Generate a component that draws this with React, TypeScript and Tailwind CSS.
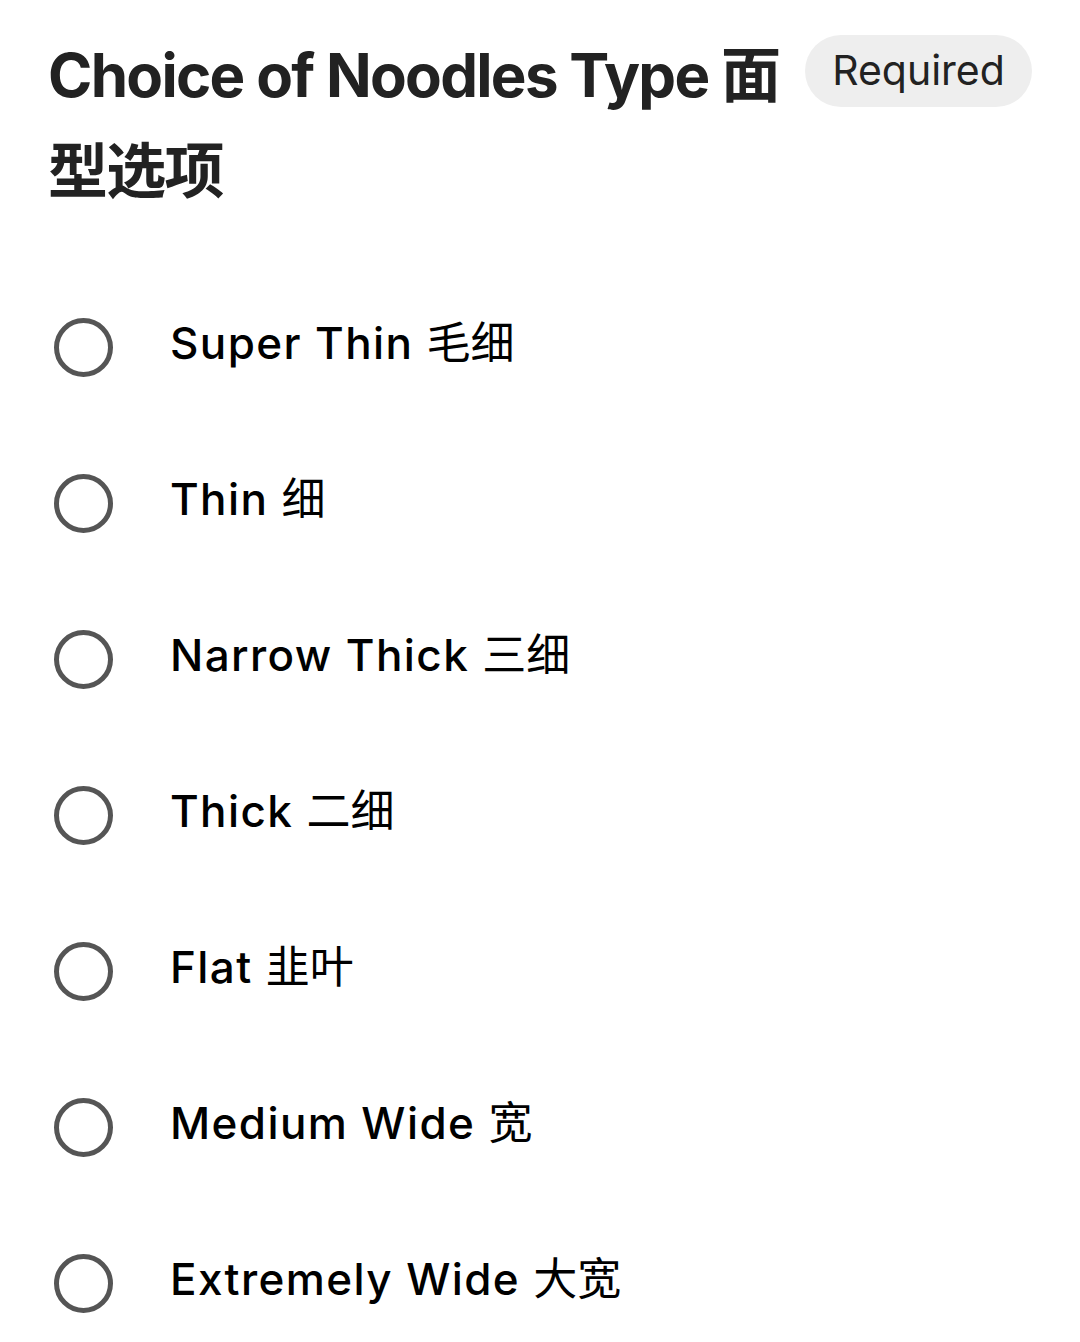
import React from 'react';

const options = [
  ['Super Thin', '毛细'],
  ['Thin', '细'],
  ['Narrow Thick', '三细'],
  ['Thick', '二细'],
  ['Flat', '韭叶'],
  ['Medium Wide', '宽'],
  ['Extremely Wide', '大宽'],
];

export default function App() {
  const [selected, setSelected] = React.useState<number | null>(null);

  return (
    <div className="w-[1080px] min-h-[1342px] bg-white px-[48px] pt-[27px]">
      <div className="flex items-start justify-between">
        <h1
          className="flex-1 text-[60px] leading-[96px] font-bold text-[#222] tracking-[-1.7px]"
          style={{ fontFamily: 'Inter, "Noto Sans CJK SC", sans-serif' }}
        >
          Choice of Noodles Type 面型选项
        </h1>
        <span
          className="mt-[8px] shrink-0 w-[227px] h-[72px] rounded-full bg-[#eeeeee] flex items-center justify-center text-[41px] text-[#222]"
          style={{ fontFamily: 'Inter, "Noto Sans CJK SC", sans-serif' }}
        >
          Required
        </span>
      </div>

      <div className="mt-[50px] flex flex-col">
        {options.map(([en, zh], i) => (
          <button
            key={en}
            onClick={() => setSelected(i)}
            className="h-[156px] flex items-center text-left"
          >
            <span className="ml-[6px] w-[59px] h-[59px] rounded-full border-[5px] border-[#555] flex items-center justify-center shrink-0">
              {selected === i && <span className="w-[29px] h-[29px] rounded-full bg-[#555]" />}
            </span>
            <span
              className="ml-[57px] pb-[8px] text-[44px] text-black"
              style={{ fontFamily: 'Inter, "Noto Sans CJK SC", sans-serif' }}
            >
              <span className="font-medium tracking-[1.4px]">{en} </span>
              <span className="font-normal">{zh}</span>
            </span>
          </button>
        ))}
      </div>
    </div>
  );
}
